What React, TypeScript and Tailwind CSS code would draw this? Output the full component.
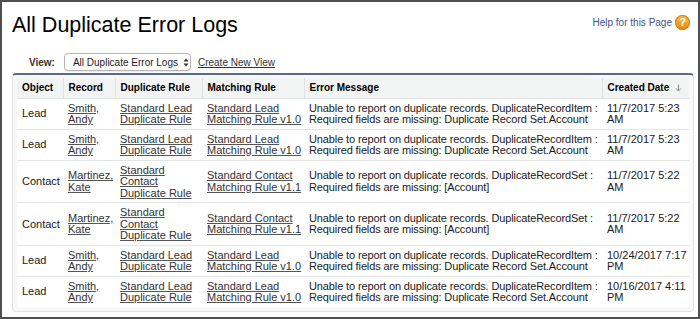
import React from "react";

type Row = {
  obj: string;
  rec: string[];
  dup: string[];
  match: string[];
  err: string[];
  date: string[];
};

const itemErr = [
  "Unable to report on duplicate records. DuplicateRecordItem :",
  "Required fields are missing: Duplicate Record Set.Account",
];
const setErr = [
  "Unable to report on duplicate records. DuplicateRecordSet :",
  "Required fields are missing: [Account]",
];

const leadRow = (date: string[]): Row => ({
  obj: "Lead",
  rec: ["Smith,", "Andy"],
  dup: ["Standard Lead", "Duplicate Rule"],
  match: ["Standard Lead", "Matching Rule v1.0"],
  err: itemErr,
  date,
});

const contactRow: Row = {
  obj: "Contact",
  rec: ["Martinez,", "Kate"],
  dup: ["Standard", "Contact", "Duplicate Rule"],
  match: ["Standard Contact", "Matching Rule v1.1"],
  err: setErr,
  date: ["11/7/2017 5:22", "AM"],
};

const rows: Row[] = [
  leadRow(["11/7/2017 5:23", "AM"]),
  leadRow(["11/7/2017 5:23", "AM"]),
  contactRow,
  contactRow,
  leadRow(["10/24/2017 7:17", "PM"]),
  leadRow(["10/16/2017 4:11", "PM"]),
];

function Lines({ lines }: { lines: string[] }) {
  return (
    <>
      {lines.map((l, i) => (
        <React.Fragment key={i}>
          {i > 0 && <br />}
          {l}
        </React.Fragment>
      ))}
    </>
  );
}

function LinkLines({ lines }: { lines: string[] }) {
  return (
    <a href="#" className="text-[#333] underline decoration-[#555] underline-offset-[1px]">
      <Lines lines={lines} />
    </a>
  );
}

function HelpIcon() {
  return (
    <span className="flex h-[15px] w-[15px] items-center justify-center rounded-full bg-linear-to-b from-[#f9be4a] to-[#e2860a] text-[11px] font-bold leading-none text-white shadow-[inset_0_0_0_1px_#d9820c]">
      ?
    </span>
  );
}

function SelectArrows() {
  return (
    <svg width="6" height="9" viewBox="0 0 6 9" className="ml-[5px]">
      <path d="M0.5 3.6 3 0.6 5.5 3.6Z" fill="#333" />
      <path d="M0.5 5.4 3 8.4 5.5 5.4Z" fill="#333" />
    </svg>
  );
}

function SortArrow() {
  return (
    <svg width="7" height="8" viewBox="0 0 7 8" className="ml-[6px] inline-block">
      <path d="M3.5 0.5V7M1 4.5 3.5 7 6 4.5" stroke="#888" strokeWidth="1" fill="none" />
    </svg>
  );
}

const headers = ["Object", "Record", "Duplicate Rule", "Matching Rule", "Error Message", "Created Date"];
const widths = [46, 52, 87, 102, 298, 87];

export default function App() {
  return (
    <div className="box-border h-[319px] w-[700px] overflow-hidden border-2 border-[#4f4f4f] bg-white font-['Liberation_Sans',Arial,sans-serif] text-[#1a1a1a]">
      <div className="flex items-start justify-between pl-[10px] pr-[8px] pt-[10px]">
        <h1 className="text-[21.5px] leading-[26px] font-normal text-black">All Duplicate Error Logs</h1>
        <a href="#" className="mt-[3px] flex items-center gap-[3px] text-[10px] text-[#3f5385]">
          Help for this Page
          <HelpIcon />
        </a>
      </div>

      <div className="mt-[15px] flex h-[18px] items-center pl-[27px] text-[10px]">
        <span className="font-bold text-[#333]">View:</span>
        <div className="ml-[9px] box-border flex h-[18px] w-[127px] items-center rounded-[4px] border border-[#b5b5b5] bg-white pl-[8px] shadow-[0_1px_1px_rgba(0,0,0,0.08)]">
          <span className="text-[10px] text-[#222]">All Duplicate Error Logs</span>
          <SelectArrows />
        </div>
        <a href="#" className="ml-[7px] text-[#333] underline">Create New View</a>
      </div>

      <div className="mt-[2px] ml-[10px] box-border w-[682px] rounded-[4px] border border-t-2 border-[#e3e3e3] border-t-[#5b6a8a] bg-[#f8f8f8] px-[4px] pt-[3px] pb-[4px]">
        <table className="w-[672px] table-fixed border-collapse bg-white text-[11px] leading-[11.5px]">
          <colgroup>
            {widths.map((w, i) => (
              <col key={i} style={{ width: w }} />
            ))}
          </colgroup>
          <thead>
            <tr className="bg-[#f2f3f3]">
              {headers.map((h, i) => (
                <th
                  key={h}
                  className={`h-[20px] border-b border-[#e0e3e5] px-0 pl-[5px] py-0 text-left align-middle text-[10px] font-bold text-black ${i > 0 ? "border-l" : ""}`}
                >
                  {h}
                  {i === headers.length - 1 && <SortArrow />}
                </th>
              ))}
            </tr>
          </thead>
          <tbody>
            {rows.map((r, i) => {
              const b = i < rows.length - 1 ? "border-b border-[#e3e5e7]" : "";
              const td = `${b} pl-[5px] pr-[2px] pt-[4px] pb-[3px] align-middle whitespace-nowrap`;
              return (
                <tr key={i}>
                  <td className={td}>{r.obj}</td>
                  <td className={td}><LinkLines lines={r.rec} /></td>
                  <td className={td}><LinkLines lines={r.dup} /></td>
                  <td className={td}><LinkLines lines={r.match} /></td>
                  <td className={`${td} tracking-[-0.12px]`}><Lines lines={r.err} /></td>
                  <td className={td}><Lines lines={r.date} /></td>
                </tr>
              );
            })}
          </tbody>
        </table>
      </div>
    </div>
  );
}
